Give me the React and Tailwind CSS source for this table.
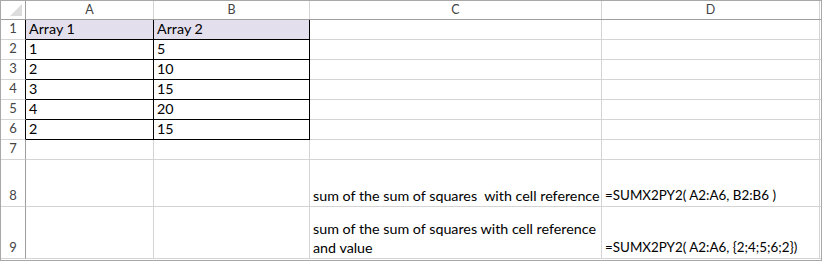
import React from "react";

const GRID = "border-[#d4d4d4]";

const cols = ["A", "B", "C", "D"];

const rows = [
  { n: 1, h: "h-[20px]", cells: ["Array 1", "Array 2", "", ""], head: true },
  { n: 2, h: "h-[20px]", cells: ["1", "5", "", ""] },
  { n: 3, h: "h-[20px]", cells: ["2", "10", "", ""] },
  { n: 4, h: "h-[20px]", cells: ["3", "15", "", ""] },
  { n: 5, h: "h-[20px]", cells: ["4", "20", "", ""] },
  { n: 6, h: "h-[20px]", cells: ["2", "15", "", ""] },
  { n: 7, h: "h-[20px]", cells: ["", "", "", ""] },
  {
    n: 8,
    h: "h-[47px]",
    cells: ["", "", "sum of the sum of squares  with cell reference", "=SUMX2PY2( A2:A6, B2:B6 )"],
  },
  {
    n: 9,
    h: "h-[52px]",
    cells: [
      "",
      "",
      ["sum of the sum of squares with cell reference", "and value"],
      "=SUMX2PY2( A2:A6, {2;4;5;6;2})",
    ],
  },
];

const widths = ["w-[128px]", "w-[156px]", "w-[292px]", "w-[218px]"];

function Cell({ value, width, ci, row }) {
  const inTable = row.n <= 6 && ci < 2;
  const border = inTable ? "border-black" : GRID;
  const bg = row.head && ci < 2 ? "bg-[#e4dfec]" : "bg-white";
  const size = ci === 3 ? "text-[13.4px]" : "text-[14.3px]";
  const lines = Array.isArray(value) ? value : value ? [value] : [];
  return (
    <div
      className={`${width} ${row.h} shrink-0 border-r border-b ${border} ${bg} flex flex-col justify-end pl-[3px] pb-[1px] ${size} leading-[19px] text-black whitespace-pre overflow-hidden`}
    >
      {lines.map((l, i) => (
        <div key={i}>{l}</div>
      ))}
    </div>
  );
}

export default function App() {
  return (
    <div
      className="w-[822px] h-[261px] border border-[#a8a8a8] bg-white overflow-hidden"
      style={{ fontFamily: "Lato, 'Liberation Sans', sans-serif" }}
    >
      {/* column header strip */}
      <div className="flex h-[19px] border-b border-[#9e9e9e]">
        <div className="w-[25px] shrink-0 border-r border-[#9e9e9e] relative">
          <svg className="absolute right-[3px] bottom-[3px]" width="12" height="12" viewBox="0 0 12 12">
            <polygon points="12,0 12,12 0,12" fill="#dcdcdc" />
          </svg>
        </div>
        {cols.map((c, i) => (
          <div
            key={c}
            className={`${widths[i]} shrink-0 border-r ${GRID} flex items-center justify-center text-[12.5px] text-[#444]`}
          >
            {c}
          </div>
        ))}
        <div className="flex-1" />
      </div>

      {rows.map((row) => (
        <div key={row.n} className="flex">
          <div
            className={`w-[25px] ${row.h} shrink-0 border-r border-b ${
              row.n <= 6 ? "border-r-black" : "border-r-[#9e9e9e]"
            } border-b-[#d4d4d4] flex items-end justify-center pb-[2px] text-[13px] leading-[17px] text-[#444]`}
          >
            {row.n}
          </div>
          {row.cells.map((v, ci) => (
            <Cell key={ci} value={v} width={widths[ci]} ci={ci} row={row} />
          ))}
          <div className={`flex-1 ${row.h} border-b ${GRID}`} />
        </div>
      ))}
    </div>
  );
}
